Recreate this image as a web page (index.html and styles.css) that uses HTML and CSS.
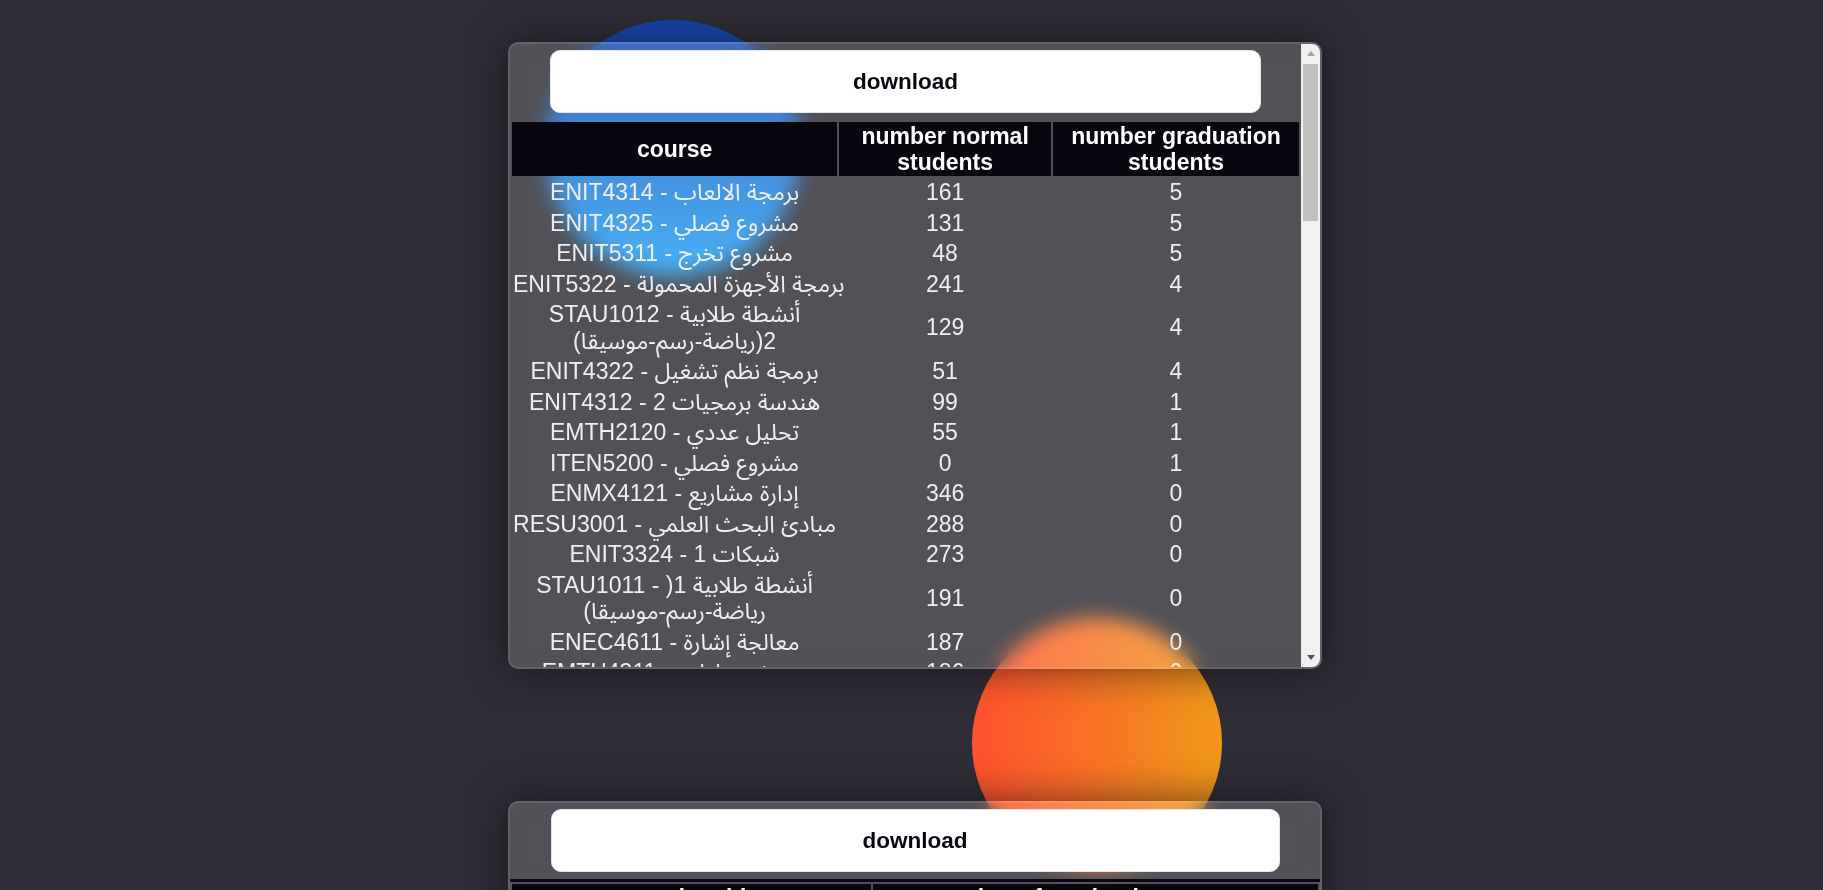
FILE: index.html
```html
<!DOCTYPE html>
<html lang="en">
<head>
<meta charset="utf-8">
<title>Courses report</title>
<link rel="stylesheet" href="styles.css">
</head>
<body>
<div class="page">
  <div class="shape shape-blue"></div>
  <div class="shape shape-orange"></div>
  <main class="stack">
    <section class="card">
      <div class="card-body">
        <button class="download" type="button">download</button>
        <table class="report">
          <thead>
            <tr><th class="c-course">course</th><th class="c-normal">number normal students</th><th class="c-grad">number graduation students</th></tr>
          </thead>
          <tbody>
            <tr><td>ENIT4314 - برمجة الالعاب</td><td>161</td><td>5</td></tr>
            <tr><td>ENIT4325 - مشروع فصلي</td><td>131</td><td>5</td></tr>
            <tr><td>ENIT5311 - مشروع تخرج</td><td>48</td><td>5</td></tr>
            <tr><td>ENIT5322 - برمجة الأجهزة المحمولة</td><td>241</td><td>4</td></tr>
            <tr><td class="wrap">STAU1012 - أنشطة طلابية 2(رياضة-رسم-موسيقا)</td><td>129</td><td>4</td></tr>
            <tr><td>ENIT4322 - برمجة نظم تشغيل</td><td>51</td><td>4</td></tr>
            <tr><td>ENIT4312 - هندسة برمجيات 2</td><td>99</td><td>1</td></tr>
            <tr><td>EMTH2120 - تحليل عددي</td><td>55</td><td>1</td></tr>
            <tr><td>ITEN5200 - مشروع فصلي</td><td>0</td><td>1</td></tr>
            <tr><td>ENMX4121 - إدارة مشاريع</td><td>346</td><td>0</td></tr>
            <tr><td>RESU3001 - مبادئ البحث العلمي</td><td>288</td><td>0</td></tr>
            <tr><td>ENIT3324 - شبكات 1</td><td>273</td><td>0</td></tr>
            <tr><td class="wrap">STAU1011 - أنشطة طلابية 1( رياضة-رسم-موسيقا)</td><td>191</td><td>0</td></tr>
            <tr><td>ENEC4611 - معالجة إشارة</td><td>187</td><td>0</td></tr>
            <tr><td>EMTH4311 - بحوث عمليات</td><td>186</td><td>0</td></tr>
            <tr><td>ENIT3312 - قواعد معطيات 1</td><td>184</td><td>0</td></tr>
            <tr><td>EMTH3210 - احتمالات وإحصاء</td><td>181</td><td>0</td></tr>
            <tr><td>ENIT2311 - برمجة 2</td><td>176</td><td>0</td></tr>
            <tr><td>ENIT3313 - خوارزميات</td><td>172</td><td>0</td></tr>
            <tr><td>ENEC3211 - دارات إلكترونية</td><td>168</td><td>0</td></tr>
            <tr><td>ENIT4311 - ذكاء صنعي</td><td>165</td><td>0</td></tr>
            <tr><td>ENIT4321 - أمن المعلومات</td><td>160</td><td>0</td></tr>
            <tr><td>ENIT3321 - نظم تشغيل</td><td>158</td><td>0</td></tr>
            <tr><td>ENIT3322 - تحليل وتصميم نظم</td><td>154</td><td>0</td></tr>
            <tr><td>ENIT4323 - برمجة الويب</td><td>150</td><td>0</td></tr>
            <tr><td>ENEC2111 - دارات كهربائية</td><td>147</td><td>0</td></tr>
            <tr><td>EMTH1110 - رياضيات 1</td><td>143</td><td>0</td></tr>
            <tr><td>EMTH1120 - رياضيات 2</td><td>140</td><td>0</td></tr>
            <tr><td>ENIT2321 - بنيان الحاسب</td><td>137</td><td>0</td></tr>
            <tr><td>ENIT3323 - مترجمات</td><td>133</td><td>0</td></tr>
            <tr><td>ENIT4324 - رسوميات حاسوبية</td><td>128</td><td>0</td></tr>
            <tr><td>ENIT5312 - تنقيب البيانات</td><td>124</td><td>0</td></tr>
            <tr><td>ENIT5321 - شبكات 2</td><td>120</td><td>0</td></tr>
            <tr><td>ENIT5323 - حوسبة سحابية</td><td>117</td><td>0</td></tr>
            <tr><td>LANG1011 - لغة إنكليزية 1</td><td>113</td><td>0</td></tr>
            <tr><td>LANG1012 - لغة إنكليزية 2</td><td>110</td><td>0</td></tr>
            <tr><td>LANG2013 - لغة إنكليزية 3</td><td>106</td><td>0</td></tr>
            <tr><td>ARAB1010 - لغة عربية</td><td>102</td><td>0</td></tr>
            <tr><td>ENIT1311 - برمجة 1</td><td>98</td><td>0</td></tr>
            <tr><td>ENIT1312 - مدخل إلى الحاسب</td><td>95</td><td>0</td></tr>
            <tr><td>EPHY1110 - فيزياء 1</td><td>91</td><td>0</td></tr>
            <tr><td>EPHY1120 - فيزياء 2</td><td>88</td><td>0</td></tr>
            <tr><td>ENIT2312 - برمجة غرضية التوجه</td><td>84</td><td>0</td></tr>
            <tr><td>ENIT3331 - هندسة برمجيات 1</td><td>80</td><td>0</td></tr>
            <tr><td>ENIT4331 - نظم موزعة</td><td>77</td><td>0</td></tr>
            <tr><td>ENIT5331 - معالجة الصور</td><td>73</td><td>0</td></tr>
            <tr><td>ENIT5332 - تعلم الآلة</td><td>70</td><td>0</td></tr>
            <tr><td>ENEC3311 - نظم رقمية</td><td>66</td><td>0</td></tr>
            <tr><td>ENEC4321 - معالجات صغرية</td><td>63</td><td>0</td></tr>
            <tr><td>EMTH2210 - رياضيات متقطعة</td><td>60</td><td>0</td></tr>
            <tr><td>EMTH3110 - بحوث عمليات 1</td><td>57</td><td>0</td></tr>
            <tr><td>ENIT4332 - نمذجة ومحاكاة</td><td>53</td><td>0</td></tr>
            <tr><td>ENIT5333 - إدارة شبكات</td><td>49</td><td>0</td></tr>
            <tr><td>ENIT5334 - أنظمة الزمن الحقيقي</td><td>46</td><td>0</td></tr>
            <tr><td>ENIT3332 - تفاعل الإنسان والحاسب</td><td>42</td><td>0</td></tr>
            <tr><td>ENIT4333 - تصميم المواقع</td><td>39</td><td>0</td></tr>
            <tr><td>ENIT5335 - معالجة لغات طبيعية</td><td>35</td><td>0</td></tr>
            <tr><td>ENIT5336 - أمن الشبكات</td><td>32</td><td>0</td></tr>
            <tr><td>ENIT4334 - قواعد معطيات موزعة</td><td>28</td><td>0</td></tr>
            <tr><td>ENIT5337 - نظم خبيرة</td><td>25</td><td>0</td></tr>
            <tr><td>ENIT5338 - رؤية حاسوبية</td><td>21</td><td>0</td></tr>
            <tr><td>ENIT4335 - اختبار البرمجيات</td><td>18</td><td>0</td></tr>
            <tr><td>ENIT5339 - إنترنت الأشياء</td><td>14</td><td>0</td></tr>
            <tr><td>ENIT4336 - برمجة متوازية</td><td>11</td><td>0</td></tr>
            <tr><td>ENIT5340 - تطوير تطبيقات الويب</td><td>8</td><td>0</td></tr>
            <tr><td>ENIT4337 - تشفير</td><td>5</td><td>0</td></tr>
            <tr><td>ENIT5341 - حوسبة متنقلة</td><td>3</td><td>0</td></tr>
            <tr><td>ENIT4338 - برمجة منطقية</td><td>1</td><td>0</td></tr>
          </tbody>
        </table>
      </div>
      <div class="scrollbar" aria-hidden="true">
        <div class="sb-btn"><span class="tri tri-up"></span></div>
        <div class="sb-track"><div class="sb-thumb"></div></div>
        <div class="sb-btn"><span class="tri tri-down"></span></div>
      </div>
    </section>

    <section class="card">
      <div class="card-body">
        <button class="download" type="button">download</button>
        <table class="report report-split">
          <thead>
            <tr><th class="c-half">student id</th><th class="c-rest">number of graduation courses</th></tr>
          </thead>
          <tbody>
            <tr><td>201810452</td><td>5</td></tr>
            <tr><td>201810317</td><td>5</td></tr>
            <tr><td>201910288</td><td>4</td></tr>
          </tbody>
        </table>
      </div>
    </section>
  </main>
</div>
</body>
</html>
```

FILE: styles.css
```css
html, body {
  margin: 0;
  height: 100%;
  overflow: hidden;
  background: #2f2e36;
  font-family: "Liberation Sans", Arial, "Noto Sans Arabic", "Noto Naskh Arabic", "DejaVu Sans Condensed", "DejaVu Sans", sans-serif;
}

.page {
  position: relative;
  min-height: 100%;
}

.shape {
  position: absolute;
  border-radius: 50%;
}

.shape-blue {
  width: 256px;
  height: 256px;
  left: 545px;
  top: 20px;
  background: linear-gradient(#1845ad, #23a2f6);
}

.shape-orange {
  width: 250px;
  height: 250px;
  left: 972px;
  top: 618px;
  background: linear-gradient(to right, #ff512f, #f09819);
}

.stack {
  position: relative;
  display: flex;
  flex-direction: column;
  align-items: center;
  gap: 132px;
  padding: 42px 0 0 7px;
}

.card {
  display: flex;
  width: 814px;
  height: 627px;
  flex: none;
  box-sizing: border-box;
  border: 2px solid rgba(255, 255, 255, 0.1);
  border-radius: 10px;
  background: rgba(255, 255, 255, 0.17);
  backdrop-filter: blur(10px);
  -webkit-backdrop-filter: blur(10px);
  box-shadow: 0 0 40px rgba(8, 7, 16, 0.6);
  overflow: hidden;
}

.card-body {
  flex: 1;
  min-width: 0;
  padding-top: 6px;
  overflow: hidden;
}

.scrollbar {
  flex: none;
  display: flex;
  flex-direction: column;
  width: 19px;
  background: #f1f1f1;
}

.sb-btn {
  flex: none;
  height: 19px;
  display: flex;
  align-items: center;
  justify-content: center;
}

.tri {
  width: 0;
  height: 0;
  border-left: 4.5px solid transparent;
  border-right: 4.5px solid transparent;
}

.tri-up {
  border-bottom: 5px solid #a3a3a3;
}

.tri-down {
  border-top: 5px solid #505050;
}

.sb-track {
  flex: 1;
  padding: 1px 2px;
}

.sb-thumb {
  height: 157px;
  background: #c1c1c1;
}

.download {
  display: block;
  width: 90%;
  height: 63px;
  margin: 0 auto 7px;
  border: 1px solid #e6e6e6;
  border-radius: 10px;
  background: #ffffff;
  color: #080710;
  font-family: "Liberation Sans", Arial, sans-serif;
  font-size: 22.5px;
  font-weight: 700;
  cursor: pointer;
}

.report {
  width: 100%;
  table-layout: fixed;
  border-spacing: 2px;
  color: #efefef;
  font-size: 23px;
  line-height: 26.5px;
}

.report th {
  padding: 1px;
  background: #080710;
  color: #ffffff;
  font-weight: 700;
  line-height: 26px;
  text-align: center;
}

.report td {
  padding: 1px;
  text-align: center;
  white-space: nowrap;
}

.report td.wrap {
  white-space: normal;
}

.c-course { width: 41.6%; }
.c-normal { width: 27%; }
.c-grad { width: 31.4%; }

.report-split {
  border-top: 3px solid #080710;
}

.c-half { width: 44.6%; }
.c-rest { width: 55.4%; }
```
